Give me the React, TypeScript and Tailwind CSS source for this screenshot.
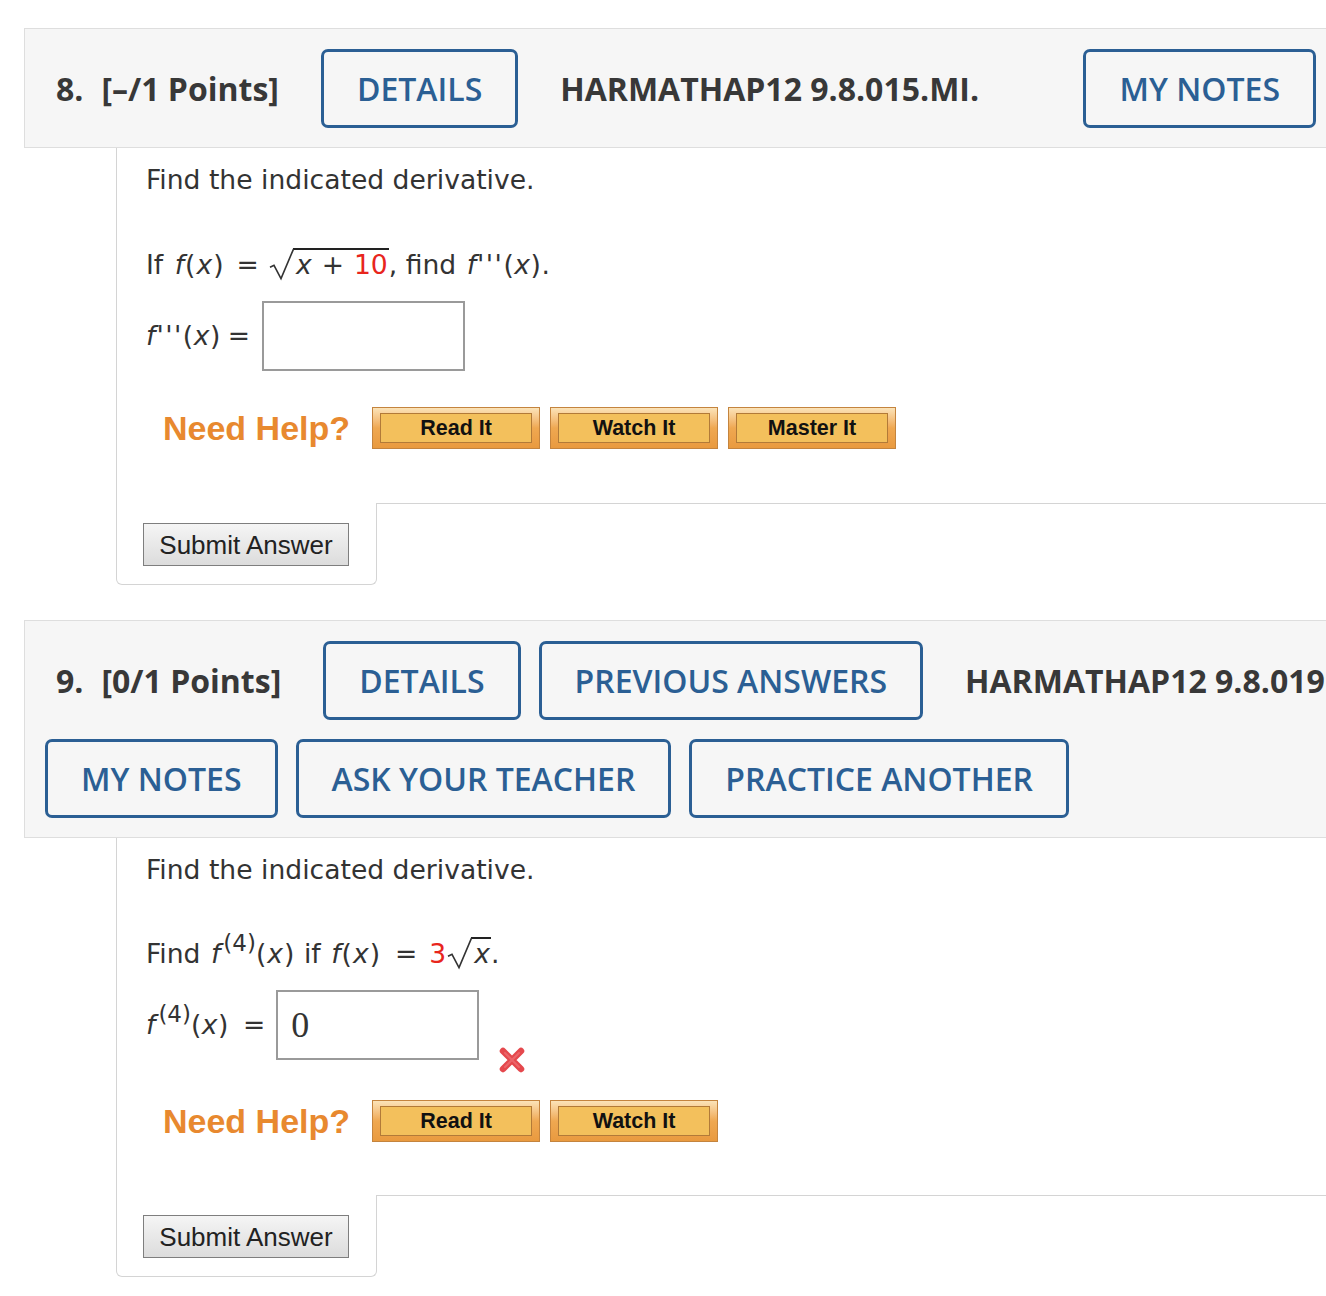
import React from "react";

const headFont = "font-['Open_Sans',Arial,sans-serif]";
const bodyFont = "font-['DejaVu_Sans',Verdana,sans-serif]";
const arialFont = "font-['Liberation_Sans',Arial,sans-serif]";

function BlueButton({ label }: { label: string }) {
    return (
        <div className="h-[79px] px-[33px] flex items-center border-[3px] border-[#2b5f94] rounded-[7px] text-[#2b5f94] text-[32px] font-semibold whitespace-nowrap">
            {label}
        </div>
    );
}

function PointsLabel({ num, pts }: { num: string; pts: string }) {
    return (
        <div className="ml-[11px] mr-[24px] text-[32px] font-bold text-[#383838] whitespace-nowrap">
            <span className="mr-[18px]">{num}</span>
            <span>{pts}</span>
        </div>
    );
}

function CodeText({ text }: { text: string }) {
    return <div className="ml-[24px] text-[32px] font-bold text-[#383838] whitespace-nowrap">{text}</div>;
}

// radical sign drawn as svg, overline from the inner span's border
function Radical({ children }: { children: React.ReactNode }) {
    return (
        <span className="relative inline-block pl-[25px] leading-[1.15]">
            <svg className="absolute left-0 top-0 h-full w-[26px]" viewBox="0 0 26 32" preserveAspectRatio="none">
                <path d="M2 19 L6 17 L13 30 L25.5 1" fill="none" stroke="#333" strokeWidth="1.6" />
            </svg>
            <span className="inline-block border-t-[2px] border-[#222] leading-[1.15] pl-[3px] pr-[1px]">{children}</span>
        </span>
    );
}

function HelpButton({ label }: { label: string }) {
    return (
        <div className="w-[168px] h-[42px] border border-[#c4843e] bg-linear-to-b from-[#fbe3b8] via-[#efa851] to-[#e99a3f] px-[7px] py-[5px]">
            <div className={`h-full border border-[#b27a38] bg-[#f3c05c] flex items-center justify-center text-[21.5px] font-bold text-[#111] ${arialFont}`}>
                {label}
            </div>
        </div>
    );
}

function HelpRow({ buttons, top }: { buttons: string[]; top: string }) {
    return (
        <div className={`flex items-center pl-[17px] ${top}`}>
            <span className={`text-[34px] leading-none font-bold text-[#e8892f] mr-[22px] ${arialFont}`}>Need Help?</span>
            <div className="flex gap-[10px]">
                {buttons.map((b) => (
                    <HelpButton key={b} label={b} />
                ))}
            </div>
        </div>
    );
}

function SubmitTab() {
    return (
        <div className="flex">
            <div className="w-[261px] h-[82px] border-x border-b border-[#d4d4d4] rounded-b-[6px] pl-[26px] pt-[20px]">
                <button className={`w-[206px] h-[43px] border-[1.5px] border-[#7e7e7e] bg-linear-to-b from-[#f5f5f5] to-[#dcdcdc] text-[26px] leading-none text-[#222] ${arialFont}`}>
                    Submit Answer
                </button>
            </div>
            <div className="flex-1 border-t border-[#d4d4d4]" />
        </div>
    );
}

function AnswerBox({ value }: { value?: string }) {
    return (
        <div className="w-[203px] h-[70px] border-2 border-[#9a9a9a] bg-white flex items-center pl-[13px] text-[36px] text-[#333] font-['Liberation_Serif','Times_New_Roman',serif]">
            {value}
        </div>
    );
}

function WrongMark() {
    return (
        <svg className="self-end -mb-[14px] ml-[19px] w-[28px] h-[28px]" viewBox="0 0 28 28">
            <path d="M5 5 L23 23 M23 5 L5 23" stroke="#e5484d" strokeWidth="6.5" strokeLinecap="round" />
            <path d="M7 7 L21 21 M21 7 L7 21" stroke="#f07a7e" strokeWidth="2" strokeLinecap="round" opacity="0.6" />
        </svg>
    );
}

function Primes() {
    return <span className="tracking-[1.5px] ml-[1px]">&#39;&#39;&#39;</span>;
}

function Sup4() {
    return <span className="relative -top-[12px] text-[23px] ml-[3px] not-italic">(4)</span>;
}

function Question8() {
    return (
        <section>
            <div className={`flex items-center gap-x-[18px] border border-[#dedede] bg-[#f6f6f6] px-[20px] pt-[20px] pb-[19px] ${headFont}`}>
                <PointsLabel num="8." pts="[–/1 Points]" />
                <BlueButton label="DETAILS" />
                <CodeText text="HARMATHAP12 9.8.015.MI." />
                <div className="ml-auto">
                    <BlueButton label="MY NOTES" />
                </div>
            </div>
            <div className={`ml-[92px] text-[26.6px] text-[#333] ${bodyFont}`}>
                <div className="border-l border-[#d4d4d4] pl-[29px] pt-[14px] pb-[54px]">
                    <div className="leading-[36px]">Find the indicated derivative.</div>
                    <div className="leading-[36px] mt-[49px] whitespace-nowrap">
                        If <span className="ml-[3px] tracking-[1px]"><i>f</i>(<i>x</i>)</span>
                        <span className="ml-[12px] mr-[9px]">=</span>
                        <Radical>
                            <i>x</i>
                            <span className="mx-[10px]">+</span>
                            <span className="text-[#e8251c]">10</span>
                        </Radical>
                        , find <i className="ml-[2px]">f<Primes /></i>
                        <span className="tracking-[0.5px]">(<i>x</i>).</span>
                    </div>
                    <div className="flex items-center mt-[18px]">
                        <span className="mr-[12px] whitespace-nowrap">
                            <i>f<Primes /></i>
                            <span className="tracking-[0.5px]">(<i>x</i>)</span>
                            <span className="ml-[7px]">=</span>
                        </span>
                        <AnswerBox />
                    </div>
                    <HelpRow top="mt-[36px]" buttons={["Read It", "Watch It", "Master It"]} />
                </div>
                <SubmitTab />
            </div>
        </section>
    );
}

function Question9() {
    return (
        <section className="mt-[35px]">
            <div className={`flex flex-col gap-y-[19px] border border-[#dedede] bg-[#f6f6f6] px-[20px] pt-[20px] pb-[19px] ${headFont}`}>
                <div className="flex items-center gap-x-[18px]">
                    <PointsLabel num="9." pts="[0/1 Points]" />
                    <BlueButton label="DETAILS" />
                    <BlueButton label="PREVIOUS ANSWERS" />
                    <CodeText text="HARMATHAP12 9.8.019.MI." />
                </div>
                <div className="flex items-center gap-x-[18px]">
                    <BlueButton label="MY NOTES" />
                    <BlueButton label="ASK YOUR TEACHER" />
                    <BlueButton label="PRACTICE ANOTHER" />
                </div>
            </div>
            <div className={`ml-[92px] text-[26.6px] text-[#333] ${bodyFont}`}>
                <div className="border-l border-[#d4d4d4] pl-[29px] pt-[14px] pb-[53px]">
                    <div className="leading-[36px]">Find the indicated derivative.</div>
                    <div className="leading-[36px] mt-[48px] whitespace-nowrap">
                        Find <i className="ml-[2px]">f</i><Sup4 />
                        <span className="tracking-[1px]">(<i>x</i>)</span> if <span className="ml-[2px] tracking-[1px]"><i>f</i>(<i>x</i>)</span>
                        <span className="ml-[14px] mr-[12px]">=</span>
                        <span className="text-[#e8251c]">3</span>
                        <Radical><i>x</i></Radical>.
                    </div>
                    <div className="flex items-center mt-[17px]">
                        <span className="mr-[11px] whitespace-nowrap">
                            <i>f</i><Sup4 />
                            <span className="tracking-[0.5px]">(<i>x</i>)</span>
                            <span className="ml-[14px]">=</span>
                        </span>
                        <AnswerBox value="0" />
                        <WrongMark />
                    </div>
                    <HelpRow top="mt-[40px]" buttons={["Read It", "Watch It"]} />
                </div>
                <SubmitTab />
            </div>
        </section>
    );
}

export default function App() {
    return (
        <div className="w-[1326px] h-[1296px] overflow-hidden bg-white pl-[24px] pt-[28px]">
            <div className="w-[1313px]">
                <Question8 />
                <Question9 />
            </div>
        </div>
    );
}
